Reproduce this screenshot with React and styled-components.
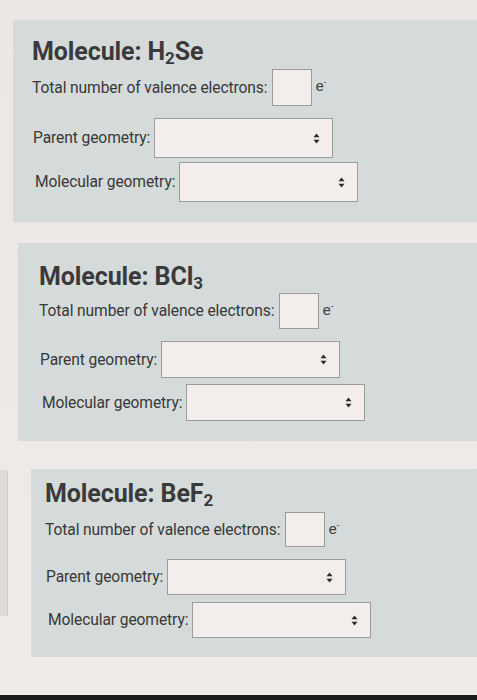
import React from "react";
import styled, { createGlobalStyle } from "styled-components";

const Global = createGlobalStyle`
  html, body { margin: 0; padding: 0; background: #ece8e5; }
  body { font-family: Roboto, "Noto Sans", Arial, sans-serif; color: #383838; }
  #root { width: 477px; height: 700px; overflow: hidden; }
`;

const Page = styled.div`
  width: 477px;
  height: 700px;
  display: flex;
  flex-direction: column;
  background: linear-gradient(#ebe7e4, #efebe8);
  position: relative;
`;

const Panel = styled.section`
  margin-left: ${(p) => p.$left}px;
  margin-top: ${(p) => p.$top}px;
  padding: ${(p) => p.$pt}px 0 ${(p) => p.$pb}px ${(p) => p.$pl}px;
  background: #d5dbda;
  display: flex;
  flex-direction: column;
`;

const Title = styled.h2`
  margin: 0;
  font-size: 25px;
  line-height: 26px;
  font-weight: 700;
  color: #3a3a3a;
  letter-spacing: -0.1px;
  sub {
    font-size: 17px;
    vertical-align: -4px;
    line-height: 0;
  }
`;

const Row = styled.div`
  display: flex;
  align-items: center;
  margin-top: ${(p) => p.$mt}px;
  padding-left: ${(p) => p.$indent || 0}px;
`;

const Label = styled.span`
  font-size: 15.6px;
  color: #383838;
  letter-spacing: -0.1px;
`;

const NumBox = styled.div`
  width: 38px;
  height: ${(p) => p.$h - 2}px;
  margin-left: 5px;
  background: #f3edeb;
  border: 1px solid #9c9c9c;
`;

const Unit = styled.span`
  font-size: 15.5px;
  color: #444;
  margin-left: 3px;
  align-self: flex-start;
  margin-top: 8px;
  sup { font-size: 9px; vertical-align: 6px; }
`;

const Select = styled.div`
  width: 179px;
  height: ${(p) => p.$h}px;
  margin-left: 4px;
  background: #f3edeb;
  border: 1px solid #9c9c9c;
  display: flex;
  align-items: center;
  justify-content: flex-end;
  padding-right: 12px;
  box-sizing: border-box;
`;

const Arrows = () => (
  <svg width="7" height="11" viewBox="0 0 7 11">
    <path d="M3.5 0.5 L6.5 4.3 L0.5 4.3 Z" fill="#2a2a2a" />
    <path d="M3.5 10.5 L6.5 6.7 L0.5 6.7 Z" fill="#2a2a2a" />
  </svg>
);

const BottomBar = styled.div`
  position: absolute;
  left: 0;
  right: 0;
  bottom: 0;
  height: 5px;
  background: #1c1c1c;
`;

const SideStrip = styled.div`
  position: absolute;
  left: 0;
  top: 470px;
  width: 7px;
  height: 146px;
  background: #dedbd9;
  border-right: 1px solid #cfcbc8;
`;

const molecules = [
  { name: "H", sub: "2", rest: "Se", left: 13, top: 20, pt: 19, pb: 20, pl: 19, r1: 4, r2: 12, r3: 4, bh: 37, sh: 40 },
  { name: "BCl", sub: "3", rest: "", left: 18, top: 21, pt: 21, pb: 20, pl: 21, r1: 3, r2: 12, r3: 6, bh: 36, sh: 37 },
  { name: "BeF", sub: "2", rest: "", left: 31, top: 28, pt: 12, pb: 19, pl: 14, r1: 5, r2: 12, r3: 7, bh: 35, sh: 36 },
];

export default function App() {
  return (
    <>
      <Global />
      <Page>
        {molecules.map((m, i) => (
          <Panel key={i} $left={m.left} $top={m.top} $pt={m.pt} $pb={m.pb} $pl={m.pl}>
            <Title>
              Molecule: {m.name}
              <sub>{m.sub}</sub>
              {m.rest}
            </Title>
            <Row $mt={m.r1}>
              <Label>Total number of valence electrons:</Label>
              <NumBox $h={m.bh} />
              <Unit>
                e<sup>-</sup>
              </Unit>
            </Row>
            <Row $mt={m.r2} $indent={1}>
              <Label>Parent geometry:</Label>
              <Select $h={m.sh}>
                <Arrows />
              </Select>
            </Row>
            <Row $mt={m.r3} $indent={3}>
              <Label>Molecular geometry:</Label>
              <Select $h={m.sh}>
                <Arrows />
              </Select>
            </Row>
          </Panel>
        ))}
        <SideStrip />
        <BottomBar />
      </Page>
    </>
  );
}
